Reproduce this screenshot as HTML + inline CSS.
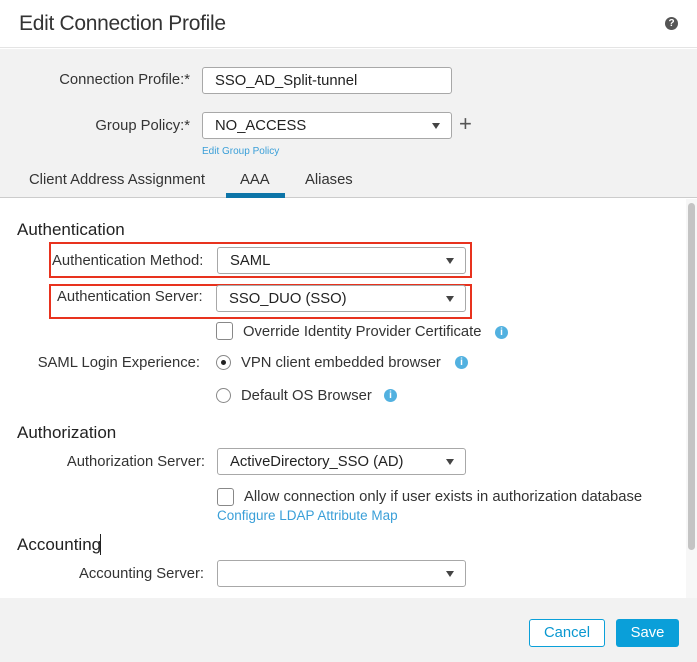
<!DOCTYPE html>
<html><head><meta charset="utf-8"><style>
*{margin:0;padding:0;box-sizing:border-box}
body{width:697px;height:662px;overflow:hidden;font-family:"Liberation Sans",sans-serif;color:#333;background:#fff;position:relative;font-size:14.8px}
.a{position:absolute;white-space:nowrap}
.inp{position:absolute;background:#fff;border:1px solid #a8a8a8;border-radius:3px;padding-left:12px;line-height:27px;font-size:14.8px;color:#222}
.arr{position:absolute;right:11px;top:10px;width:0;height:0;border-left:4px solid transparent;border-right:4px solid transparent;border-top:6px solid #444}
.lbl{position:absolute;text-align:right;white-space:nowrap;font-size:14.8px;color:#333}
.red{position:absolute;border:2px solid #e8321e}
.cb{position:absolute;width:17px;height:18px;border:1px solid #888;border-radius:3px;background:#fff}
.info{position:absolute;width:13px;height:13px;border-radius:50%;background:#52b1e0;color:#fff;font-size:10px;font-weight:bold;text-align:center;line-height:13px}
.rad{position:absolute;width:15px;height:15px;border:1px solid #888;border-radius:50%;background:#fff}
.h{position:absolute;font-size:17px;color:#222}
</style></head><body>
<div class="a" style="left:0;top:0;width:697px;height:48px;background:#fff;border-bottom:1px solid #e4e4e4"></div>
<div class="a" style="left:19px;top:12px;font-size:21px;color:#333;letter-spacing:-0.3px">Edit Connection Profile</div>
<div class="a" style="left:665px;top:17px;width:13px;height:13px;border-radius:50%;background:#555;color:#fff;font-size:10px;font-weight:bold;text-align:center;line-height:13px">?</div>
<div class="a" style="left:0;top:49px;width:697px;height:149px;background:#f2f2f2;border-bottom:1px solid #ccc"></div>
<div class="lbl" style="right:507px;top:72px">Connection Profile:*</div>
<div class="inp" style="left:202px;top:67px;width:250px;height:27px">SSO_AD_Split-tunnel</div>
<div class="lbl" style="right:507px;top:118px">Group Policy:*</div>
<div class="inp" style="left:202px;top:112px;width:250px;height:27px">NO_ACCESS<div class="arr"></div></div>
<div class="a" style="left:459px;top:111px;font-size:22px;color:#555;font-weight:300">+</div>
<div class="a" style="left:202px;top:146px;font-size:10px;color:#3a9fd8">Edit Group Policy</div>
<div class="a" style="left:29px;top:172px">Client Address Assignment</div>
<div class="a" style="left:240px;top:172px">AAA</div>
<div class="a" style="left:305px;top:172px">Aliases</div>
<div class="a" style="left:226px;top:193px;width:59px;height:5px;background:#0d75a8"></div>
<div class="a" style="left:686px;top:199px;width:11px;height:399px;background:#f7f7f7"></div>
<div class="a" style="left:688px;top:203px;width:7px;height:347px;background:#c4c4c4;border-radius:4px"></div>
<div class="h" style="left:17px;top:220px">Authentication</div>
<div class="red" style="left:49px;top:242px;width:423px;height:36px"></div>
<div class="lbl" style="left:52px;top:253px">Authentication Method:</div>
<div class="inp" style="left:217px;top:247px;width:249px;height:27px">SAML<div class="arr"></div></div>
<div class="red" style="left:49px;top:284px;width:423px;height:35px"></div>
<div class="lbl" style="left:57px;top:289px">Authentication Server:</div>
<div class="inp" style="left:216px;top:285px;width:250px;height:27px">SSO_DUO (SSO)<div class="arr"></div></div>
<div class="cb" style="left:216px;top:322px"></div>
<div class="a" style="left:243px;top:324px">Override Identity Provider Certificate</div>
<div class="info" style="left:495px;top:326px">i</div>
<div class="lbl" style="right:497px;top:355px">SAML Login Experience:</div>
<div class="rad" style="left:216px;top:355px"><div style="position:absolute;left:4px;top:4px;width:5px;height:5px;border-radius:50%;background:#222"></div></div>
<div class="a" style="left:241px;top:355px">VPN client embedded browser</div>
<div class="info" style="left:455px;top:356px">i</div>
<div class="rad" style="left:216px;top:388px"></div>
<div class="a" style="left:241px;top:388px">Default OS Browser</div>
<div class="info" style="left:384px;top:389px">i</div>
<div class="h" style="left:17px;top:423px">Authorization</div>
<div class="lbl" style="right:492px;top:454px">Authorization Server:</div>
<div class="inp" style="left:217px;top:448px;width:249px;height:27px">ActiveDirectory_SSO (AD)<div class="arr"></div></div>
<div class="cb" style="left:217px;top:488px"></div>
<div class="a" style="left:244px;top:489px">Allow connection only if user exists in authorization database</div>
<div class="a" style="left:217px;top:508px;font-size:13.5px;color:#3a9fd8">Configure LDAP Attribute Map</div>
<div class="h" style="left:17px;top:535px">Accounting</div>
<div class="a" style="left:100px;top:534px;width:1px;height:21px;background:#222"></div>
<div class="lbl" style="right:493px;top:566px">Accounting Server:</div>
<div class="inp" style="left:217px;top:560px;width:249px;height:27px"><div class="arr"></div></div>
<div class="a" style="left:0;top:598px;width:697px;height:64px;background:#f2f2f2"></div>
<div class="a" style="left:529px;top:619px;width:76px;height:28px;border:1px solid #0aa0d9;border-radius:3px;background:#fff;color:#0a98d0;text-align:center;line-height:27px">Cancel</div>
<div class="a" style="left:616px;top:619px;width:63px;height:28px;border-radius:3px;background:#0a9fd9;color:#fff;text-align:center;line-height:28px">Save</div>
</body></html>
